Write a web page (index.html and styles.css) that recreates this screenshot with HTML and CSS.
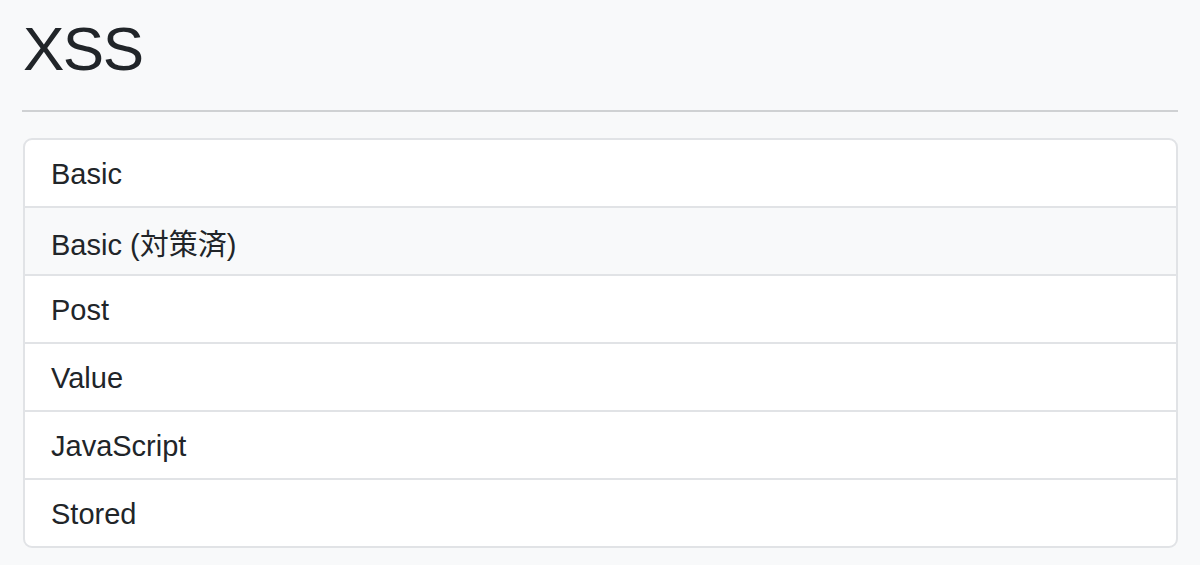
FILE: index.html
```html
<!DOCTYPE html>
<html lang="ja">
<head>
<meta charset="utf-8">
<title>XSS</title>
<link rel="stylesheet" href="styles.css">
</head>
<body>
<main class="page">
  <h1 class="title">XSS</h1>
  <hr class="rule">
  <ul class="list">
    <li class="item">Basic</li>
    <li class="item item-active">Basic (対策済)</li>
    <li class="item">Post</li>
    <li class="item">Value</li>
    <li class="item">JavaScript</li>
    <li class="item">Stored</li>
  </ul>
</main>
</body>
</html>
```
FILE: styles.css
```css
html, body {
  margin: 0;
  padding: 0;
  background: #f8f9fa;
}
body {
  font-family: "Liberation Sans", "Noto Sans CJK JP", Arial, sans-serif;
  color: #212529;
}
.page {
  padding: 0 22px 0 22px;
  display: flex;
  flex-direction: column;
}
.title {
  margin: 0;
  padding-top: 13px;
  font-size: 62px;
  font-weight: 400;
  line-height: 72px;
  padding-left: 1px;
  letter-spacing: -1.5px;
}
.rule {
  margin: 25px 0 0 0;
  border: 0;
  border-top: 2px solid #cfd1d3;
  height: 0;
}
.list {
  list-style: none;
  margin: 26px 0 0 1px;
  padding: 0;
  background: #fff;
  border: 2px solid #e1e3e6;
  border-radius: 9px;
  overflow: hidden;
}
.item {
  height: 66px;
  display: flex;
  align-items: center;
  padding: 2px 26px 0;
  box-sizing: border-box;
  font-size: 29px;
  border-top: 2px solid #e1e3e6;
}
.item:first-child {
  border-top: 0;
  height: 66px;
}
.item + .item {
  height: 68px;
}
.item-active {
  background: #f8f9fa;
}
```
